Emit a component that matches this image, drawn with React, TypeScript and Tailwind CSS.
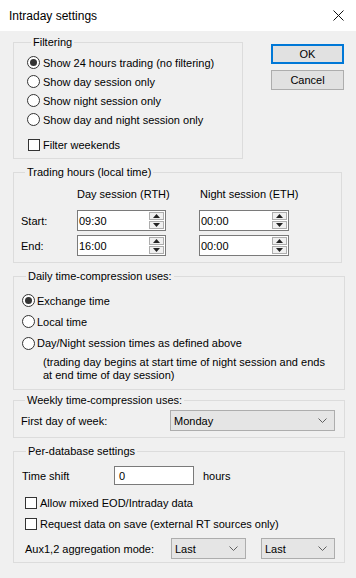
import React from "react";

function Radio({ checked, label, gap = "gap-[3px]", h = "h-[19px]" }: { checked?: boolean; label: string; gap?: string; h?: string }) {
  return (
    <div className={`flex items-center ${gap} ${h}`}>
      <span className="w-[13px] h-[13px] rounded-full border border-[#333333] bg-white flex items-center justify-center shrink-0">
        {checked && <span className="w-[7px] h-[7px] rounded-full bg-[#333333]" />}
      </span>
      <span>{label}</span>
    </div>
  );
}

function Check({ label, h = "h-[19px]" }: { label: string; h?: string }) {
  return (
    <div className={`flex items-center gap-[3px] ${h}`}>
      <span className="w-[12px] h-[12px] border border-[#333333] bg-white shrink-0" />
      <span>{label}</span>
    </div>
  );
}

function SpinBox({ value, w }: { value: string; w: string }) {
  return (
    <div className={`${w} h-[21px] border border-[#7a7a7a] bg-white flex items-center justify-between pl-[1px] pr-[1px]`}>
      <span>{value}</span>
      <div className="flex flex-col gap-[1px]">
        {[0, 1].map((i) => (
          <div key={i} className="w-[15px] h-[8px] border border-[#adadad] bg-[#f0f0f0] flex items-center justify-center">
            <svg width="7" height="4" viewBox="0 0 7 4">
              {i === 0 ? <polygon points="3.5,0 7,4 0,4" fill="#222" /> : <polygon points="0,0 7,0 3.5,4" fill="#222" />}
            </svg>
          </div>
        ))}
      </div>
    </div>
  );
}

function Combo({ value, w }: { value: string; w: string }) {
  return (
    <div className={`${w} h-[21px] border border-[#adadad] bg-[#e5e5e5] flex items-center justify-between pl-[3px] pr-[7px]`}>
      <span>{value}</span>
      <svg width="9" height="5" viewBox="0 0 9 5">
        <polyline points="0.5,0.5 4.5,4.5 8.5,0.5" fill="none" stroke="#606060" strokeWidth="1" />
      </svg>
    </div>
  );
}

function Group({ title, w, className = "", children }: { title: string; w: string; className?: string; children: React.ReactNode }) {
  return (
    <fieldset className={`border border-[#dcdcdc] ${w} ${className}`}>
      <legend className="ml-[4px] px-[2px] leading-[16px]">{title}</legend>
      {children}
    </fieldset>
  );
}

export default function App() {
  return (
    <div className="w-[356px] h-[578px] overflow-hidden bg-[#f0f0f0] text-[11px] leading-[16px] text-black font-['Liberation_Sans',Arial,sans-serif]">
      {/* Title bar */}
      <div className="h-[31px] bg-white flex items-center justify-between pl-[9px] pr-[12px]">
        <span className="text-[12px]">Intraday settings</span>
        <svg width="11" height="11" viewBox="0 0 11 11">
          <path d="M0.5 0.5 L10.5 10.5 M10.5 0.5 L0.5 10.5" stroke="#111" strokeWidth="1" />
        </svg>
      </div>

      <div className="pl-[13px] pt-[3px]">
        {/* Filtering + buttons */}
        <div className="flex">
          <Group title="Filtering" w="w-[230px]" className="pl-[13px] pt-[3px] pb-[4px]">
            <Radio checked label="Show 24 hours trading (no filtering)" />
            <Radio label="Show day session only" />
            <Radio label="Show night session only" />
            <Radio label="Show day and night session only" />
            <div className="mt-[6px] ml-[1px]">
              <Check label="Filter weekends" />
            </div>
          </Group>
          <div className="ml-[28px] mt-[10px] flex flex-col gap-[6px]">
            <button className="w-[73px] h-[20px] border-2 border-[#0078d7] bg-[#e1e1e1] flex items-center justify-center">OK</button>
            <button className="w-[73px] h-[20px] border border-[#adadad] bg-[#e1e1e1] flex items-center justify-center">Cancel</button>
          </div>
        </div>

        {/* Trading hours */}
        <Group title="Trading hours (local time)" w="w-[329px]" className="mt-[5px] pl-[7px] pt-[6px] pb-[6px]">
          <div className="flex h-[16px] items-center pl-[56px]">
            <span className="w-[123px]">Day session (RTH)</span>
            <span>Night session (ETH)</span>
          </div>
          <div className="flex items-center mt-[8px]">
            <span className="w-[56px]">Start:</span>
            <SpinBox value="09:30" w="w-[89px]" />
            <div className="ml-[33px]">
              <SpinBox value="00:00" w="w-[90px]" />
            </div>
          </div>
          <div className="flex items-center mt-[4px]">
            <span className="w-[56px]">End:</span>
            <SpinBox value="16:00" w="w-[89px]" />
            <div className="ml-[33px]">
              <SpinBox value="00:00" w="w-[90px]" />
            </div>
          </div>
        </Group>

        {/* Daily */}
        <Group title="Daily time-compression uses:" w="w-[332px]" className="mt-[5px] pl-[8px] pt-[6px] pb-[7px]">
          <Radio checked label="Exchange time" gap="gap-[2px]" h="h-[21px]" />
          <Radio label="Local time" gap="gap-[2px]" h="h-[21px]" />
          <Radio label="Day/Night session times as defined above" gap="gap-[2px]" h="h-[22px]" />
          <p className="pl-[21px] mt-[2px] leading-[13px]">
            (trading day begins at start time of night session and ends
            <br />
            at end time of day session)
          </p>
        </Group>

        {/* Weekly */}
        <Group title="Weekly time-compression uses:" w="w-[332px]" className="mt-[2px] pl-[7px] pt-[2px] pb-[6px]">
          <div className="flex items-center">
            <span className="w-[149px]">First day of week:</span>
            <Combo value="Monday" w="w-[165px]" />
          </div>
        </Group>

        {/* Per-database */}
        <Group title="Per-database settings" w="w-[332px]" className="mt-[5px] pl-[8px] pt-[7px] pb-[3px]">
          <div className="flex items-center">
            <span className="w-[92px]">Time shift</span>
            <div className="w-[80px] h-[19px] border border-[#7a7a7a] bg-white flex items-center pl-[4px]">0</div>
            <span className="ml-[9px]">hours</span>
          </div>
          <div className="ml-[3px] mt-[7px]">
            <Check label="Allow mixed EOD/Intraday data" h="h-[21px]" />
            <Check label="Request data on save (external RT sources only)" h="h-[21px]" />
          </div>
          <div className="flex items-center mt-[4px] pl-[3px]">
            <span className="w-[146px]">Aux1,2 aggregation mode:</span>
            <Combo value="Last" w="w-[75px]" />
            <div className="ml-[15px]">
              <Combo value="Last" w="w-[74px]" />
            </div>
          </div>
        </Group>
      </div>
    </div>
  );
}
